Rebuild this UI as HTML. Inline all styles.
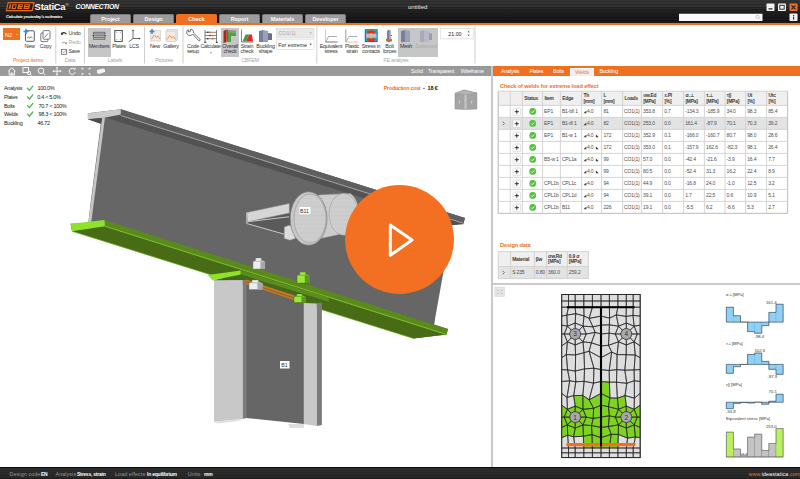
<!DOCTYPE html>
<html><head><meta charset="utf-8">
<style>
*{margin:0;padding:0;box-sizing:border-box}
html,body{width:800px;height:479px;overflow:hidden;background:#fff;font-family:"Liberation Sans",sans-serif;position:relative}
.a{position:absolute}
#title{left:0;top:0;width:800px;height:23px;background:repeating-linear-gradient(180deg,rgba(255,255,255,0.06) 0px,rgba(0,0,0,0.15) 1.1px,rgba(255,255,255,0.03) 2.3px,rgba(0,0,0,0.12) 3.2px),linear-gradient(180deg,#303030 0%,#2a2a2a 25%,#1e1e1e 50%,#141414 75%,#0e0e0e 100%);}
.tab{position:absolute;top:13.7px;height:9.3px;width:41px;background:#9c9c9c;border-radius:2px 2px 0 0;color:#fafafa;font-size:5.6px;font-weight:bold;text-align:center;line-height:8.2px;font-family:"Liberation Sans",sans-serif;letter-spacing:-0.1px;border:0.5px solid #7a7a7a;border-bottom:none}
.tab.on{background:#f07022;border-color:#f07022}
#oline{left:0;top:23px;width:800px;height:2px;background:#f07022}
.lbl{position:absolute;font-size:5.4px;color:#333;text-align:center;line-height:4.9px;white-space:nowrap;letter-spacing:-0.25px}
#tb{left:0;top:65.7px;width:491px;height:10px;background:#9a9a9a;border-top:1px solid #929292}
#split{left:490.8px;top:65.6px;width:2.5px;height:401px;background:#c8c8c8}
#hsplit{left:493px;top:282.8px;width:307px;height:2.2px;background:#cacaca}
#rtabs{left:493px;top:65.85px;width:307px;height:10.2px;background:#f07022}
.rt{position:absolute;top:66px;font-size:5.4px;color:#fff;line-height:10px;white-space:nowrap;letter-spacing:-0.2px}
#status{left:0;top:466.5px;width:800px;height:12.5px;border-top:1px solid #0c0c0c;background:repeating-linear-gradient(180deg,rgba(255,255,255,0.04) 0px,rgba(0,0,0,0.12) 1px,rgba(255,255,255,0.03) 2.2px,rgba(0,0,0,0.1) 3.1px),linear-gradient(180deg,#2a2a2a,#262626 60%,#1e1e1e)}
.st{position:absolute;top:467.5px;font-size:5.3px;line-height:13px;white-space:nowrap;color:#9a9a9a;letter-spacing:0.12px}
.st b{color:#fff;letter-spacing:-0.22px;font-size:5px}
</style></head><body>
<div id="title" class="a"></div>
<!-- TITLE BAR CONTENT -->
<svg class="a" style="left:0;top:0" width="800" height="23" viewBox="0 0 800 23">
<polygon points="8.2,2.6 34,2.6 32.2,10.6 6.4,10.6" fill="#1a1a1a" stroke="#ea6c1f" stroke-width="1.1"/>
<g fill="#ea6c1f">
<polygon points="9.6,4.2 11.2,4.2 10.2,9 8.6,9"/>
<polygon points="12.4,4.2 16.8,4.2 15.8,9 11.4,9"/>
<polygon points="18.2,4.2 23,4.2 22.6,6.9 19.2,6.9 19,7.6 22.4,7.6 22.1,9 17.2,9"/>
<polygon points="24.4,4.2 30.2,4.2 29.2,9 23.4,9"/>
</g>
<g fill="#1a1a1a">
<polygon points="13.6,5.2 15.6,5.2 15,8 13,8"/>
<rect x="19.7" y="5.3" width="2.4" height="0.7"/>
<polygon points="25.4,5.3 28.8,5.3 28.7,6 25.2,6"/>
<polygon points="24.9,7.3 28.5,7.3 28.3,8 24.8,8"/>
</g>
<text x="34.6" y="10.1" font-size="9.4" fill="#fff" font-family="Liberation Sans" font-weight="bold" letter-spacing="-0.22">StatiCa</text>
<text x="65.6" y="6" font-size="4.2" fill="#eee" font-family="Liberation Sans">®</text>
<text x="75.5" y="9.4" font-size="6.8" fill="#fff" font-family="Liberation Sans" font-weight="bold" font-style="italic" letter-spacing="-0.25">CONNECTION</text>
<text x="6" y="17.9" font-size="4.2" fill="#fff" font-family="Liberation Sans" font-weight="bold" font-style="italic" letter-spacing="-0.22">Calculate yesterday's estimates</text>
<text x="408" y="9" font-size="6" fill="#e8e8e8" font-family="Liberation Sans">untitled</text>
<!-- window buttons -->
<rect x="766.5" y="3.5" width="8" height="7.5" rx="0.8" fill="#f2f2f2"/>
<rect x="768.5" y="8.2" width="4" height="1.3" fill="#333"/>
<rect x="778" y="3.5" width="8" height="7.5" rx="0.8" fill="#f2f2f2"/>
<rect x="779.8" y="5.3" width="4.4" height="3.9" fill="none" stroke="#333" stroke-width="1"/>
<rect x="789.5" y="3.5" width="8" height="7.5" rx="0.8" fill="#f07022"/>
<path d="M791.5,5.3l4,4M795.5,5.3l-4,4" stroke="#222" stroke-width="1.2"/>
<!-- search -->
<rect x="679" y="13.75" width="83.5" height="7.25" fill="#fafafa"/>
<circle cx="757.5" cy="16.8" r="1.6" fill="none" stroke="#aaa" stroke-width="0.6"/>
<path d="M758.7,18l1.5,1.5" stroke="#aaa" stroke-width="0.6"/>
<rect x="789.5" y="13.5" width="8" height="7.5" rx="0.8" fill="#f2f2f2"/>
<rect x="793" y="15" width="1.2" height="1" fill="#333"/><rect x="793" y="16.6" width="1.2" height="3" fill="#333"/>
</svg>
<div class="tab" style="left:90px">Project</div>
<div class="tab" style="left:133px">Design</div>
<div class="tab on" style="left:176px">Check</div>
<div class="tab" style="left:219px">Report</div>
<div class="tab" style="left:262px">Materials</div>
<div class="tab" style="left:305px">Developer</div>
<div id="oline" class="a"></div>
<!-- RIBBON -->
<div class="a" style="left:87.6px;top:28px;width:23px;height:28.7px;background:#c6c6c6"></div>
<div class="a" style="left:221.2px;top:28px;width:17.5px;height:28.5px;background:#c6c6c6"></div>
<div class="a" style="left:398.2px;top:27.8px;width:39.7px;height:29.2px;background:#c6c6c6"></div>
<div class="a" style="left:2.5px;top:28.2px;width:17.4px;height:12px;background:#f07022"></div>
<svg class="a" style="left:0;top:25px" width="800" height="40" viewBox="0 25 800 40">
<g stroke="#cfcfcf" stroke-width="1"><path d="M55.8,26.7V63.5M84.5,26.7V63.5M144.5,26.7V63.5M183,26.7V63.5M316.8,26.7V63.5M475,26.7V63.5"/></g>
<text x="5" y="36.5" font-size="5.5" fill="#fff" font-family="Liberation Sans">N2</text>
<path d="M16.3,34h1.6l-0.8,0.9z" fill="#fff"/>
<!-- New doc -->
<rect x="25.5" y="30.8" width="8.8" height="10.5" rx="1" fill="#fff" stroke="#333" stroke-width="0.8"/>
<path d="M27.2,38l1.2-1 1.3,1 1.5-1.2 1.3,1.2" stroke="#333" stroke-width="0.7" fill="none"/>
<path d="M26,29v5M23.5,31.5h5" stroke="#3a8be0" stroke-width="1.6"/>
<!-- Copy -->
<rect x="40.8" y="33" width="7" height="8.6" rx="1" fill="#fff" stroke="#444" stroke-width="0.7"/>
<rect x="43" y="30.6" width="7" height="8.6" rx="1" fill="#fff" stroke="#444" stroke-width="0.7"/>
<path d="M44.5,37.5l3.5-4" stroke="#444" stroke-width="0.7"/>
<!-- Undo Redo Save -->
<path d="M61.8,33.6q2.2-2 4.6,0.4" stroke="#222" stroke-width="1.1" fill="none"/><path d="M61,32.2v2.6h2.5z" fill="#222"/>
<path d="M61.8,43q2.2-2 4.6,0.4" stroke="#999" stroke-width="0.9" fill="none"/><path d="M66.8,41.8v2.4h-2.3z" fill="#999"/>
<rect x="61.3" y="49.3" width="5.2" height="5" fill="#fff" stroke="#555" stroke-width="0.7"/>
<path d="M62.5,51.6l1.3,1.2 2.2-2.4" stroke="#555" stroke-width="0.6" fill="none"/>
<!-- Members icon -->
<g stroke="#333" stroke-width="0.6" fill="none">
<path d="M93.5,32.3h11.5M93.5,34h11.5M93.5,37.6h11.5M93.5,39.3h11.5"/>
<path d="M93.5,32.3v1.7M105,32.3v1.7M93.5,37.6v1.7M105,37.6v1.7"/>
<path d="M94.5,35.8h9.5"/>
</g>
<path d="M92.2,35.8l1.8-1.3v2.6zM106.3,35.8l-1.8-1.3v2.6z" fill="#333"/>
<!-- Plates icon -->
<rect x="114.8" y="30.5" width="7.5" height="11" fill="#fff" stroke="#333" stroke-width="0.8"/>
<path d="M115.8,31.5l1.3,1.3M121.3,31.5l-1.3,1.3M115.8,40.5l1.3-1.3M121.3,40.5l-1.3-1.3" stroke="#333" stroke-width="0.5"/>
<!-- LCS icon -->
<path d="M133,30v8.5l-4.2,3.3M133,38.5h6.5" stroke="#333" stroke-width="0.7" fill="none"/>
<path d="M132,31l1-1.6 1,1.6zM139,37.6l1.5,0.9-1.5,0.9z" fill="#333"/>
<!-- Pictures New / Gallery -->
<rect x="150.5" y="30.5" width="10" height="10.5" fill="#f6e9df" stroke="#bbb" stroke-width="0.5"/>
<path d="M151.5,39l2.7-4 2.2,2.6 1.5-1.7 2,3.1" stroke="#f07022" stroke-width="0.7" fill="none"/>
<path d="M152,29v5M149.5,31.5h5" stroke="#3a8be0" stroke-width="1.6"/>
<rect x="167.5" y="29.7" width="10" height="10.5" fill="#eee" stroke="#bbb" stroke-width="0.5"/>
<rect x="166" y="31" width="10" height="10.5" fill="#f6e9df" stroke="#bbb" stroke-width="0.5"/>
<path d="M167,39.5l2.7-4 2.2,2.6 1.5-1.7 2,3.1" stroke="#f07022" stroke-width="0.7" fill="none"/>
<!-- Code setup wrench -->
<path d="M188.2,29.6 A3.2,3.2 0 1 0 192.6,34 L198.6,40.6 A1,1 0 0 0 200,39.2 L193.6,33 A3.2,3.2 0 0 0 190.6,29.2 L190.2,31.6 188.6,32 Z" fill="#fff" stroke="#444" stroke-width="0.75" stroke-linejoin="round"/>
<!-- Calculate abacus -->
<path d="M205,30v12.5M216.5,30v12.5M205,32.3h11.5M205,35.5h11.5M205,38.7h11.5" stroke="#333" stroke-width="0.6"/><path d="M204.3,42.3h2M215.8,42.3h2" stroke="#222" stroke-width="1"/>
<g fill="#e06a20"><rect x="209.2" y="31.6" width="1.6" height="1.4"/><rect x="211.6" y="34.8" width="1.6" height="1.4"/><rect x="211.6" y="38" width="1.6" height="1.4"/></g>
<g fill="#444"><rect x="207" y="31.6" width="1.5" height="1.4"/><rect x="209.2" y="34.8" width="1.5" height="1.4"/><rect x="207" y="38" width="1.5" height="1.4"/></g>
<path d="M210,52.5h1.8l-0.9,1z" fill="#333"/>
<!-- Overall check -->
<polygon points="223.5,31 226.5,29.5 226.5,42 223.5,43" fill="#a02a20"/>
<polygon points="226.5,29.5 228,30 228,41.5 226.5,42" fill="#d03a2a"/>
<polygon points="228,32 236,32.5 236,36 231,36 231,42 228,42" fill="#4aa63a"/>
<polygon points="228,30 236,30.5 236,32.5 228,32" fill="#909090"/>
<!-- Strain check -->
<path d="M241.5,29.5v12.5h12" stroke="#333" stroke-width="0.6" fill="none"/>
<polygon points="242.5,41.5 245.5,34.5 249,34.5 246,41.5" fill="#2aa64a"/>
<polygon points="246,41.5 249,34.5 252,34.5 253,41.5" fill="#e02a2a"/>
<!-- Buckling shape -->
<polygon points="259,31 263,30 263,42 259,42" fill="#7a7e9a"/>
<polygon points="263,30 268,31 268,42 263,42" fill="#9aa0b8"/>
<polygon points="268,33 272,33.5 272,40 268,40" fill="#6a6e88"/>
<!-- CO1(1) dropdowns -->
<rect x="276.5" y="28.5" width="37.5" height="9.5" fill="#e8e8e8" stroke="#d0d0d0" stroke-width="0.5"/>
<text x="278.5" y="35.4" font-size="5.3" fill="#aaa" font-family="Liberation Sans">CO1(1)</text>
<path d="M309.5,32.5h2.2l-1.1,1.2z" fill="#999"/>
<rect x="276.5" y="39.8" width="37.5" height="9.6" fill="#fff" stroke="#cfcfcf" stroke-width="0.5"/>
<text x="278.3" y="46.6" font-size="5.3" fill="#222" font-family="Liberation Sans">For extreme</text>
<path d="M309.5,43.8h2.4l-1.2,1.3z" fill="#222"/>
<!-- Equivalent stress -->
<path d="M325.5,29.5v12.5" stroke="#f4a080" stroke-width="0.7"/>
<path d="M325.5,42h12" stroke="#333" stroke-width="0.7"/>
<path d="M326,41.5l2.5-5h8.5" stroke="#8a8a8a" stroke-width="0.7" fill="none"/>
<!-- Plastic strain -->
<path d="M345.8,29.5v12.5" stroke="#555" stroke-width="0.6"/>
<path d="M345.8,42h12.5" stroke="#f4a080" stroke-width="0.7"/>
<path d="M346.3,41.5l2.5-5h8.5" stroke="#8a8a8a" stroke-width="0.7" fill="none"/>
<!-- Stress in contacts -->
<rect x="364.8" y="29.3" width="12.8" height="12.8" fill="#1e3adc"/>
<rect x="365.6" y="30" width="11.2" height="11.4" fill="#22c0b8"/>
<ellipse cx="371.2" cy="31.8" rx="4.6" ry="1.6" fill="#f02a1a"/>
<ellipse cx="371.2" cy="39.6" rx="4.6" ry="1.6" fill="#f02a1a"/>
<rect x="366" y="34" width="10.4" height="3.6" fill="#b8c0d0"/>
<rect x="370.5" y="33" width="1.4" height="5.5" fill="#c8d830"/>
<!-- Bolt forces -->
<polygon points="386,39 389,37.5 392,39 392,41 389,42.5 386,41" fill="#d06a2a"/>
<polygon points="387,31 389,29.5 389,39.5 387,40" fill="#7a80a0"/>
<polygon points="389,29.5 390.8,30.5 390.8,39.5 389,39.5" fill="#9aa0c0"/>
<rect x="390.8" y="35" width="1.2" height="1" fill="#555"/>
<!-- Mesh / Deformed -->
<polygon points="401,31 405.5,30 405.5,42 401,42" fill="#7a7e9a"/>
<polygon points="405.5,30 410,31 410,42 405.5,42" fill="#9aa0b8"/>
<polygon points="420,31 424.5,30 424.5,42 420,42" fill="#a8aabb"/>
<polygon points="424.5,30 429,31 429,42 424.5,42" fill="#b8bac8"/>
<polygon points="429,33 432,33.5 432,40 429,40" fill="#9a9cb0"/>
<!-- spinner -->
<rect x="440.2" y="28.3" width="33" height="10.6" fill="#fff" stroke="#cfcfcf" stroke-width="0.6"/>
<text x="448.3" y="35.7" font-size="5.3" fill="#222" font-family="Liberation Sans">21.00</text>
<path d="M467.5,32.3h2.2l-1.1-1.3zM467.5,34.8h2.2l-1.1,1.3z" fill="#333"/>
</svg>
<div class="lbl" style="left:24.5px;top:43.6px;width:10px">New</div>
<div class="lbl" style="left:39.8px;top:43.6px;width:11px">Copy</div>
<div class="lbl" style="left:12px;top:58.4px;width:32px;color:#f39a62;font-weight:bold;letter-spacing:-0.3px">Project items</div>
<div class="lbl" style="left:68.5px;top:30.6px;text-align:left">Undo</div>
<div class="lbl" style="left:68.5px;top:40px;text-align:left;color:#aaa">Redo</div>
<div class="lbl" style="left:68.5px;top:49.3px;text-align:left">Save</div>
<div class="lbl" style="left:64px;top:58.2px;width:12px;color:#a8a8a8">Data</div>
<div class="lbl" style="left:87.6px;top:43.6px;width:23px">Members</div>
<div class="lbl" style="left:112px;top:43.6px;width:14px">Plates</div>
<div class="lbl" style="left:128px;top:43.6px;width:12px">LCS</div>
<div class="lbl" style="left:105px;top:58.2px;width:20px;color:#a8a8a8">Labels</div>
<div class="lbl" style="left:148px;top:43.6px;width:14px">New</div>
<div class="lbl" style="left:162px;top:43.6px;width:18px">Gallery</div>
<div class="lbl" style="left:153px;top:58.2px;width:22px;color:#a8a8a8">Pictures</div>
<div class="lbl" style="left:185px;top:43.6px;width:16px">Code<br>setup</div>
<div class="lbl" style="left:200px;top:43.6px;width:21px">Calculate</div>
<div class="lbl" style="left:221px;top:43.6px;width:18px">Overall<br>check</div>
<div class="lbl" style="left:239px;top:43.6px;width:16px">Strain<br>check</div>
<div class="lbl" style="left:255px;top:43.6px;width:21px">Buckling<br>shape</div>
<div class="lbl" style="left:240px;top:58.2px;width:20px;color:#a8a8a8">CBFEM</div>
<div class="lbl" style="left:318px;top:43.6px;width:26px">Equivalent<br>stress</div>
<div class="lbl" style="left:343px;top:43.6px;width:18px">Plastic<br>strain</div>
<div class="lbl" style="left:360px;top:43.6px;width:22px">Stress in<br>contacts</div>
<div class="lbl" style="left:382px;top:43.6px;width:15px">Bolt<br>forces</div>
<div class="lbl" style="left:398.5px;top:43.6px;width:15px">Mesh</div>
<div class="lbl" style="left:413.5px;top:43.6px;width:25px;color:#aaa">Deformed</div>
<div class="lbl" style="left:380px;top:58.2px;width:32px;color:#a8a8a8">FE analysis</div>
<div id="tb" class="a"></div>
<!-- TOOLBAR ICONS -->
<svg class="a" style="left:0;top:65px" width="491" height="11" viewBox="0 65 491 11">
<g stroke="#f8f8f8" stroke-width="1" fill="none">
<path d="M8.2,71.2l3.6-3.4 3.6,3.4M9.2,70.5v4.6h5.2v-4.6M11,75.1v-2h1.7v2"/>
<rect x="23" y="67.5" width="5.5" height="5"/>
<circle cx="29" cy="73" r="1.7"/><path d="M30.2,74.2l1.2,1.2"/>
<circle cx="41" cy="70.8" r="2.8"/><path d="M43,72.8l2.2,2.2"/>
<path d="M57,67.2v8M53,71.2h8M56,68.2l1-1 1,1M56,74.2l1,1 1-1M54,70.2l-1,1 1,1M60,70.2l1,1-1,1"/>
<path d="M74.6,69.5a3,3 0 1 0 0.6,2.6M73.5,68.3l1.4,1.3 0.4-1.9"/>
<path d="M82,67.5v1.5h1.5M90,67.5v1.5h-1.5M82,75.2v-1.5h1.5M90,75.2v-1.5h-1.5"/>
</g>
<polygon points="97,70 103,68.5 105,69.5 105,72 99,74 97,73" fill="#f4f4f4"/>
<text x="411" y="73" font-size="5.4" fill="#fff" font-family="Liberation Sans" letter-spacing="0">Solid</text>
<text x="428" y="73" font-size="5.4" fill="#fff" font-family="Liberation Sans" letter-spacing="-0.25">Transparent</text>
<text x="460.8" y="73" font-size="5.4" fill="#fff" font-family="Liberation Sans" letter-spacing="-0.2">Wireframe</text>
</svg>
<!-- LEFT PANEL TEXT -->
<svg class="a" style="left:0;top:80px" width="120" height="50" viewBox="0 80 120 50">
<g font-size="5.5" fill="#222" font-family="Liberation Sans" letter-spacing="-0.3">
<text x="4" y="90.3">Analysis</text>
<text x="4" y="99">Plates</text>
<text x="4" y="107.6">Bolts</text>
<text x="4" y="116.2">Welds</text>
<text x="4" y="125.1">Buckling</text>
<text x="37.6" y="90.3">100.0%</text>
<text x="37.2" y="99">0.4 &lt; 5.0%</text>
<text x="38.6" y="107.6">70.7 &lt; 100%</text>
<text x="38.6" y="116.2">98.3 &lt; 100%</text>
<text x="37.6" y="125.1">46.72</text>
</g>
<g stroke="#4db848" stroke-width="1.3" fill="none" stroke-linecap="round">
<path d="M27.5,88.3l2,2 3.3-4.2"/>
<path d="M27.5,97l2,2 3.3-4.2"/>
<path d="M27.5,105.6l2,2 3.3-4.2"/>
<path d="M27.5,114.2l2,2 3.3-4.2"/>
</g>
</svg>
<!-- production cost + cube -->
<svg class="a" style="left:370px;top:80px" width="121" height="40" viewBox="370 80 121 40">
<text x="383.8" y="90" font-size="5.4" fill="#f07022" font-family="Liberation Sans" font-weight="bold" letter-spacing="-0.3">Production cost</text>
<text x="423" y="90" font-size="5.6" fill="#222" font-family="Liberation Sans" font-weight="bold">-</text>
<text x="427.5" y="90" font-size="5.6" fill="#222" font-family="Liberation Sans" font-weight="bold" letter-spacing="-0.2">18 €</text>
<polygon points="455,93.4 464,90 476.9,93.1 476.9,109 465.3,109.5 455,109" fill="#a4a4a4" stroke="#8a8a8a" stroke-width="0.5"/>
<polygon points="455,93.4 464,90 476.9,93.1 465.3,95" fill="#b4b4b4" stroke="#8c8c8c" stroke-width="0.4"/>
<rect x="464.5" y="95" width="2" height="14.5" fill="#c6c6c6"/>
<path d="M459.5,100.5v3M472,100.5l-0.6,3" stroke="#e8e8e8" stroke-width="0.7"/>
</svg>
<svg class="a" style="left:0;top:76px" width="491" height="390" viewBox="0 76 491 390">
<!-- base -->
<polygon points="87.9,113.3 120.8,109.2 465,218 463.3,224.2 451,225.3 440,276 434,324.5 448,329 446.5,334.5 413.6,338.6 72,231.25 70.5,223.75 88.3,223 91,200 100.8,123.75 87.9,119.2" fill="#5c5c5c"/>
<!-- web -->
<polygon points="105,116.5 452,224.3 434,324.5 91,222" fill="#666666"/>
<!-- top flange underside -->
<polygon points="105,117.5 120.8,115.9 463.3,223.4 451,225.3" fill="#525252"/>
<!-- top flange side band -->
<polygon points="120.8,109.2 465,218 463.3,224 120.8,115.6" fill="#5f5f5f"/>
<line x1="120.8" y1="115.6" x2="463.3" y2="223.2" stroke="#a9a9a9" stroke-width="0.9"/>
<!-- web end strip -->
<polygon points="102.1,117.9 105,117.5 91.3,222 88.3,223" fill="#c6c6c6"/>
<!-- top flange end face -->
<polygon points="87.9,113.3 120.8,109.2 120.8,114.6 105,117.5 102.1,117.9 87.9,119.2" fill="#cacaca"/>
<polygon points="87.9,119.2 102.1,117.9 100.8,123.75" fill="#4c4c4c"/>
<!-- bottom flange -->
<polygon points="104.5,220 448,329 446.5,334.5 105,226.25" fill="#5a8a1c"/>
<polygon points="72,231.25 105,226.25 446.5,334.5 413.6,338.6" fill="#486c16"/>
<line x1="105" y1="226.25" x2="446.5" y2="334.5" stroke="#86c92e" stroke-width="0.9"/>
<line x1="72" y1="231.25" x2="413.6" y2="338.6" stroke="#7fd02a" stroke-width="0.6"/>
<polygon points="70.5,223.75 104.5,220 105,226.25 72,231.25" fill="#8ee22a"/>
<!-- column -->
<polygon points="246,279 304,298 304,424 246,418" fill="#666666"/>
<polygon points="214.1,280.3 242.8,276.6 242.8,419 214,421.7" fill="#c8c8c8"/>
<polygon points="242.8,276.6 246.5,277 246.5,418 242.8,419" fill="#7c7c7c"/>
<polygon points="214,421.7 242.8,419 246.5,418 238,421 218,423.5" fill="#e0e0e0"/>
<polygon points="303.75,303.1 316.9,303.5 316.9,426 303.75,424" fill="#c8c8c8"/>
<polygon points="316.9,303.5 321.9,302 321.9,425 316.9,426" fill="#7c7c7c"/>
<polygon points="288,424 304,424 304,428 290,428" fill="#dedede"/>
<!-- column end plate -->
<polygon points="240.7,270.4 328.75,297.5 328.75,301.9 240.7,274.5" fill="#5b8c1c"/>
<polygon points="212.5,280.3 240.7,274.5 328.75,301.9 322,303 246,280" fill="#46681a"/>
<polygon points="207.8,275 240.7,270.4 240.7,274.5 212.5,280.3" fill="#8ee22a"/>
<!-- weld -->
<polygon points="246,279.5 294,295.5 294,300 246,284" fill="#c47a1e"/>
<line x1="246" y1="282" x2="294" y2="298" stroke="#7a4a10" stroke-width="0.6"/>
<!-- bolts -->
<polygon points="253,261.85 256.0,260.2 262.0,260.2 265,261.85 265,269 253,269" fill="#ededed" stroke="#7a7a7a" stroke-width="0.45"/><polygon points="260.44,261.3 265,261.85 265,269 260.44,269" fill="#a8a8a8"/><polygon points="255.64,258 261.4,258 261.4,261.3 255.64,261.3" fill="#ededed" stroke="#7a7a7a" stroke-width="0.4"/>
<polygon points="249,283.325 252.375,281.9 259.125,281.9 262.5,283.325 262.5,289.5 249,289.5" fill="#ededed" stroke="#7a7a7a" stroke-width="0.45"/><polygon points="257.37,282.85 262.5,283.325 262.5,289.5 257.37,289.5" fill="#a8a8a8"/><polygon points="251.97,280 258.45,280 258.45,282.85 251.97,282.85" fill="#ededed" stroke="#7a7a7a" stroke-width="0.4"/>
<polygon points="297,275.85 300.125,274.2 306.375,274.2 309.5,275.85 309.5,283 297,283" fill="#9be83a" stroke="#3f6e10" stroke-width="0.45"/><polygon points="304.75,275.3 309.5,275.85 309.5,283 304.75,283" fill="#5c9a1c"/><polygon points="299.75,272 305.75,272 305.75,275.3 299.75,275.3" fill="#9be83a" stroke="#3f6e10" stroke-width="0.4"/>
<polygon points="294,296.975 297.0,295.7 303.0,295.7 306,296.975 306,302.5 294,302.5" fill="#9be83a" stroke="#3f6e10" stroke-width="0.45"/><polygon points="301.44,296.55 306,296.975 306,302.5 301.44,302.5" fill="#5c9a1c"/><polygon points="296.64,294 302.4,294 302.4,296.55 296.64,296.55" fill="#9be83a" stroke="#3f6e10" stroke-width="0.4"/>
<!-- B1 label -->
<rect x="280" y="361" width="9.5" height="7.5" fill="#fff"/>
<text x="281.2" y="367" font-size="5.2" fill="#333" font-family="Liberation Sans">B1</text>
<!-- B11 cylinder arm -->
<defs><pattern id="dots" width="1.3" height="1.3" patternUnits="userSpaceOnUse"><rect width="1.3" height="1.3" fill="#dcdcdc"/><circle cx="0.65" cy="0.65" r="0.36" fill="#959595"/></pattern></defs>
<polygon points="246.7,212.6 289.3,203.4 290,228 285,234.4 246.7,223.5" fill="#5a5a5a"/>
<polygon points="246.7,212.6 289.3,203.4 289.3,213 247.5,221.8" fill="#d6d6d6" stroke="#8e8e8e" stroke-width="0.5"/>
<path d="M247,221.8 L289,216.8 M246.7,223.5 L285,234.4" stroke="#c8c8c8" stroke-width="1"/>
<path d="M246.7,212.6v11" stroke="#bbb" stroke-width="1.2"/>
<polygon points="284.3,227 289,225.2 295.2,227 295.2,238.5 290,240.2 284.3,238.5" fill="#dcdcdc" stroke="#8a8a8a" stroke-width="0.5"/>
<!-- cylinder body -->
<path d="M318.6,195 L350.4,193.4 A14.6,20.9 0 0 1 347,232.7 L320,238.6 Z" fill="url(#dots)" stroke="#9a9a9a" stroke-width="0.5"/>
<ellipse cx="343.7" cy="214.3" rx="14.6" ry="20.9" fill="url(#dots)" stroke="#9a9a9a" stroke-width="0.6"/>
<ellipse cx="308.6" cy="218.5" rx="18.4" ry="26.8" fill="#c8c8c8" stroke="#7a7a7a" stroke-width="0.7"/>
<ellipse cx="310" cy="218.5" rx="16" ry="24.5" fill="url(#dots)" stroke="#8a8a8a" stroke-width="0.5"/>
<rect x="299.5" y="207" width="11" height="7.3" fill="#fff"/>
<text x="300.1" y="212.9" font-size="5.2" fill="#333" font-family="Liberation Sans">B11</text>
<!-- play -->
<circle cx="399.5" cy="239.5" r="54.5" fill="#f37022"/>
<polygon points="390.3,225 412,240 390.3,255.3" fill="none" stroke="#fff" stroke-width="3" stroke-linejoin="round"/>
</svg>
<div id="split" class="a"></div>
<div id="rtabs" class="a"></div>
<div class="a" style="left:569.6px;top:67.6px;width:24.2px;height:8.5px;background:#efefef;border:1px solid #fff;border-bottom:none"></div>
<div class="rt" style="left:500.9px">Analysis</div>
<div class="rt" style="left:529.4px">Plates</div>
<div class="rt" style="left:553px">Bolts</div>
<div class="rt" style="left:575.2px;top:66.8px;color:#f08448">Welds</div>
<div class="rt" style="left:599.4px">Buckling</div>
<svg class="a" style="left:493px;top:76px" width="307" height="210" viewBox="493 76 307 210">
<rect x="498.2" y="91.2" width="289.40000000000003" height="14.200000000000003" fill="#efefef"/>
<rect x="498.2" y="117.4" width="289.40000000000003" height="12.0" fill="#e3e3e3"/>
<path d="M498.2,91.2V213.4M510.3,91.2V213.4M522.4,91.2V213.4M542.6,91.2V213.4M560.4,91.2V213.4M581.6,91.2V213.4M601.6,91.2V213.4M622.6,91.2V213.4M641.4,91.2V213.4M662.6,91.2V213.4M683.6,91.2V213.4M704.4,91.2V213.4M725,91.2V213.4M745.6,91.2V213.4M766.6,91.2V213.4M787.6,91.2V213.4M498.2,91.2H787.6M498.2,105.4H787.6M498.2,117.4H787.6M498.2,129.4H787.6M498.2,141.4H787.6M498.2,153.4H787.6M498.2,165.4H787.6M498.2,177.4H787.6M498.2,189.4H787.6M498.2,201.4H787.6M498.2,213.4H787.6" stroke="#d0d0d0" stroke-width="0.9" fill="none"/>
<path d="M498.2,91.2V213.4H787.6V91.2" stroke="#c4c4c4" stroke-width="1" fill="none"/>
<g font-family="Liberation Sans" font-size="4.9" font-weight="bold" fill="#3a3a3a" letter-spacing="-0.2">
<text x="524.1999999999999" y="100.1">Status</text>
<text x="544.4" y="100.1">Item</text>
<text x="562.1999999999999" y="100.1">Edge</text>
<text x="583.4" y="97.4">Th</text>
<text x="583.4" y="102.8">[mm]</text>
<text x="603.4" y="97.4">L</text>
<text x="603.4" y="102.8">[mm]</text>
<text x="624.4" y="100.1">Loads</text>
<text x="643.1999999999999" y="97.4">ow.Ed</text>
<text x="643.1999999999999" y="102.8">[MPa]</text>
<text x="664.4" y="97.4">ε.Pl</text>
<text x="664.4" y="102.8">[%]</text>
<text x="685.4" y="97.4">σ.⊥</text>
<text x="685.4" y="102.8">[MPa]</text>
<text x="706.1999999999999" y="97.4">τ.⊥</text>
<text x="706.1999999999999" y="102.8">[MPa]</text>
<text x="726.8" y="97.4">τ||</text>
<text x="726.8" y="102.8">[MPa]</text>
<text x="747.4" y="97.4">Ut</text>
<text x="747.4" y="102.8">[%]</text>
<text x="768.4" y="97.4">Utc</text>
<text x="768.4" y="102.8">[%]</text>
</g>
<g font-family="Liberation Sans" font-size="5" fill="#4e4e4e" letter-spacing="-0.15">
<rect x="513.0" y="108.0" width="7.6" height="7.4" rx="0.6" fill="#fff" stroke="#cfcfcf" stroke-width="0.6"/>
<path d="M516.8,109.60000000000001v4.2M514.7,111.7h4.2" stroke="#222" stroke-width="0.9"/>
<circle cx="532.7" cy="111.4" r="3.4" fill="#54c43a"/>
<path d="M531.0,111.5l1.2,1.2 2.2-2.3" stroke="#fff" stroke-width="0.9" fill="none"/>
<text x="544.1" y="113.2">EP1</text>
<text x="561.9" y="113.2">B1-bfl 1</text>
<path d="M583.6,113.2h2.8v-2.8z" fill="#333"/>
<text x="587.0" y="113.2">4.0</text>
<text x="603.4" y="113.2">81</text>
<text x="624.1" y="113.2">CO1(1)</text>
<text x="643.0" y="113.2">353.8</text>
<text x="664.2" y="113.2">0.7</text>
<text x="685.2" y="113.2">-134.3</text>
<text x="706.0" y="113.2">-185.9</text>
<text x="726.6" y="113.2">34.0</text>
<text x="747.2" y="113.2">98.3</text>
<text x="768.2" y="113.2">85.4</text>
<rect x="513.0" y="120.0" width="7.6" height="7.4" rx="0.6" fill="#fff" stroke="#cfcfcf" stroke-width="0.6"/>
<path d="M516.8,121.60000000000001v4.2M514.7,123.7h4.2" stroke="#222" stroke-width="0.9"/>
<circle cx="532.7" cy="123.4" r="3.4" fill="#54c43a"/>
<path d="M531.0,123.5l1.2,1.2 2.2-2.3" stroke="#fff" stroke-width="0.9" fill="none"/>
<text x="544.1" y="125.2">EP1</text>
<text x="561.9" y="125.2">B1-tfl 1</text>
<path d="M583.6,125.2h2.8v-2.8z" fill="#333"/>
<text x="587.0" y="125.2">4.0</text>
<text x="603.4" y="125.2">82</text>
<text x="624.1" y="125.2">CO1(1)</text>
<text x="643.0" y="125.2">253.0</text>
<text x="664.2" y="125.2">0.0</text>
<text x="685.2" y="125.2">161.4</text>
<text x="706.0" y="125.2">-87.9</text>
<text x="726.6" y="125.2">70.1</text>
<text x="747.2" y="125.2">70.3</text>
<text x="768.2" y="125.2">39.2</text>
<path d="M502.59999999999997,121.60000000000001l1.8,1.8-1.8,1.8" stroke="#444" stroke-width="0.7" fill="none"/>
<rect x="513.0" y="132.0" width="7.6" height="7.4" rx="0.6" fill="#fff" stroke="#cfcfcf" stroke-width="0.6"/>
<path d="M516.8,133.6v4.2M514.7,135.70000000000002h4.2" stroke="#222" stroke-width="0.9"/>
<circle cx="532.7" cy="135.4" r="3.4" fill="#54c43a"/>
<path d="M531.0,135.5l1.2,1.2 2.2-2.3" stroke="#fff" stroke-width="0.9" fill="none"/>
<text x="544.1" y="137.20000000000002">EP1</text>
<text x="561.9" y="137.20000000000002">B1-w 1</text>
<path d="M583.6,137.20000000000002h2.8v-2.8z" fill="#333"/>
<text x="587.0" y="137.20000000000002">4.0</text>
<path d="M595.9,134.4v2.8h2.8z" fill="#333"/>
<text x="603.4" y="137.20000000000002">172</text>
<text x="624.1" y="137.20000000000002">CO1(1)</text>
<text x="643.0" y="137.20000000000002">352.9</text>
<text x="664.2" y="137.20000000000002">0.1</text>
<text x="685.2" y="137.20000000000002">-166.0</text>
<text x="706.0" y="137.20000000000002">-160.7</text>
<text x="726.6" y="137.20000000000002">80.7</text>
<text x="747.2" y="137.20000000000002">98.0</text>
<text x="768.2" y="137.20000000000002">28.6</text>
<rect x="513.0" y="144.0" width="7.6" height="7.4" rx="0.6" fill="#fff" stroke="#cfcfcf" stroke-width="0.6"/>
<path d="M516.8,145.6v4.2M514.7,147.70000000000002h4.2" stroke="#222" stroke-width="0.9"/>
<circle cx="532.7" cy="147.4" r="3.4" fill="#54c43a"/>
<path d="M531.0,147.5l1.2,1.2 2.2-2.3" stroke="#fff" stroke-width="0.9" fill="none"/>
<path d="M583.6,149.20000000000002h2.8v-2.8z" fill="#333"/>
<text x="587.0" y="149.20000000000002">4.0</text>
<path d="M595.9,146.4v2.8h2.8z" fill="#333"/>
<text x="603.4" y="149.20000000000002">172</text>
<text x="624.1" y="149.20000000000002">CO1(1)</text>
<text x="643.0" y="149.20000000000002">353.0</text>
<text x="664.2" y="149.20000000000002">0.1</text>
<text x="685.2" y="149.20000000000002">-157.9</text>
<text x="706.0" y="149.20000000000002">162.6</text>
<text x="726.6" y="149.20000000000002">-82.3</text>
<text x="747.2" y="149.20000000000002">98.1</text>
<text x="768.2" y="149.20000000000002">26.4</text>
<rect x="513.0" y="156.0" width="7.6" height="7.4" rx="0.6" fill="#fff" stroke="#cfcfcf" stroke-width="0.6"/>
<path d="M516.8,157.6v4.2M514.7,159.70000000000002h4.2" stroke="#222" stroke-width="0.9"/>
<circle cx="532.7" cy="159.4" r="3.4" fill="#54c43a"/>
<path d="M531.0,159.5l1.2,1.2 2.2-2.3" stroke="#fff" stroke-width="0.9" fill="none"/>
<text x="544.1" y="161.20000000000002">B5-w 1</text>
<text x="561.9" y="161.20000000000002">CPL1a</text>
<path d="M583.6,161.20000000000002h2.8v-2.8z" fill="#333"/>
<text x="587.0" y="161.20000000000002">4.0</text>
<path d="M595.9,158.4v2.8h2.8z" fill="#333"/>
<text x="603.4" y="161.20000000000002">99</text>
<text x="624.1" y="161.20000000000002">CO1(1)</text>
<text x="643.0" y="161.20000000000002">57.0</text>
<text x="664.2" y="161.20000000000002">0.0</text>
<text x="685.2" y="161.20000000000002">-42.4</text>
<text x="706.0" y="161.20000000000002">-21.6</text>
<text x="726.6" y="161.20000000000002">-3.9</text>
<text x="747.2" y="161.20000000000002">16.4</text>
<text x="768.2" y="161.20000000000002">7.7</text>
<rect x="513.0" y="168.0" width="7.6" height="7.4" rx="0.6" fill="#fff" stroke="#cfcfcf" stroke-width="0.6"/>
<path d="M516.8,169.6v4.2M514.7,171.70000000000002h4.2" stroke="#222" stroke-width="0.9"/>
<circle cx="532.7" cy="171.4" r="3.4" fill="#54c43a"/>
<path d="M531.0,171.5l1.2,1.2 2.2-2.3" stroke="#fff" stroke-width="0.9" fill="none"/>
<path d="M583.6,173.20000000000002h2.8v-2.8z" fill="#333"/>
<text x="587.0" y="173.20000000000002">4.0</text>
<path d="M595.9,170.4v2.8h2.8z" fill="#333"/>
<text x="603.4" y="173.20000000000002">99</text>
<text x="624.1" y="173.20000000000002">CO1(1)</text>
<text x="643.0" y="173.20000000000002">80.5</text>
<text x="664.2" y="173.20000000000002">0.0</text>
<text x="685.2" y="173.20000000000002">-52.4</text>
<text x="706.0" y="173.20000000000002">31.3</text>
<text x="726.6" y="173.20000000000002">16.2</text>
<text x="747.2" y="173.20000000000002">22.4</text>
<text x="768.2" y="173.20000000000002">8.9</text>
<rect x="513.0" y="180.0" width="7.6" height="7.4" rx="0.6" fill="#fff" stroke="#cfcfcf" stroke-width="0.6"/>
<path d="M516.8,181.6v4.2M514.7,183.70000000000002h4.2" stroke="#222" stroke-width="0.9"/>
<circle cx="532.7" cy="183.4" r="3.4" fill="#54c43a"/>
<path d="M531.0,183.5l1.2,1.2 2.2-2.3" stroke="#fff" stroke-width="0.9" fill="none"/>
<text x="544.1" y="185.20000000000002">CPL1b</text>
<text x="561.9" y="185.20000000000002">CPL1c</text>
<path d="M583.6,185.20000000000002h2.8v-2.8z" fill="#333"/>
<text x="587.0" y="185.20000000000002">4.0</text>
<text x="603.4" y="185.20000000000002">94</text>
<text x="624.1" y="185.20000000000002">CO1(1)</text>
<text x="643.0" y="185.20000000000002">44.9</text>
<text x="664.2" y="185.20000000000002">0.0</text>
<text x="685.2" y="185.20000000000002">-16.8</text>
<text x="706.0" y="185.20000000000002">24.0</text>
<text x="726.6" y="185.20000000000002">-1.0</text>
<text x="747.2" y="185.20000000000002">12.5</text>
<text x="768.2" y="185.20000000000002">3.2</text>
<rect x="513.0" y="192.0" width="7.6" height="7.4" rx="0.6" fill="#fff" stroke="#cfcfcf" stroke-width="0.6"/>
<path d="M516.8,193.6v4.2M514.7,195.70000000000002h4.2" stroke="#222" stroke-width="0.9"/>
<circle cx="532.7" cy="195.4" r="3.4" fill="#54c43a"/>
<path d="M531.0,195.5l1.2,1.2 2.2-2.3" stroke="#fff" stroke-width="0.9" fill="none"/>
<text x="544.1" y="197.20000000000002">CPL1b</text>
<text x="561.9" y="197.20000000000002">CPL1d</text>
<path d="M583.6,197.20000000000002h2.8v-2.8z" fill="#333"/>
<text x="587.0" y="197.20000000000002">4.0</text>
<text x="603.4" y="197.20000000000002">94</text>
<text x="624.1" y="197.20000000000002">CO1(1)</text>
<text x="643.0" y="197.20000000000002">39.1</text>
<text x="664.2" y="197.20000000000002">0.0</text>
<text x="685.2" y="197.20000000000002">1.7</text>
<text x="706.0" y="197.20000000000002">22.5</text>
<text x="726.6" y="197.20000000000002">0.6</text>
<text x="747.2" y="197.20000000000002">10.9</text>
<text x="768.2" y="197.20000000000002">5.1</text>
<rect x="513.0" y="204.0" width="7.6" height="7.4" rx="0.6" fill="#fff" stroke="#cfcfcf" stroke-width="0.6"/>
<path d="M516.8,205.6v4.2M514.7,207.70000000000002h4.2" stroke="#222" stroke-width="0.9"/>
<circle cx="532.7" cy="207.4" r="3.4" fill="#54c43a"/>
<path d="M531.0,207.5l1.2,1.2 2.2-2.3" stroke="#fff" stroke-width="0.9" fill="none"/>
<text x="544.1" y="209.20000000000002">CPL1b</text>
<text x="561.9" y="209.20000000000002">B11</text>
<path d="M583.6,209.20000000000002h2.8v-2.8z" fill="#333"/>
<text x="587.0" y="209.20000000000002">4.0</text>
<text x="603.4" y="209.20000000000002">226</text>
<text x="624.1" y="209.20000000000002">CO1(1)</text>
<text x="643.0" y="209.20000000000002">19.1</text>
<text x="664.2" y="209.20000000000002">0.0</text>
<text x="685.2" y="209.20000000000002">-5.5</text>
<text x="706.0" y="209.20000000000002">6.2</text>
<text x="726.6" y="209.20000000000002">-8.6</text>
<text x="747.2" y="209.20000000000002">5.3</text>
<text x="768.2" y="209.20000000000002">2.7</text>
</g>
<rect x="498.2" y="251.6" width="90.19999999999999" height="15.000000000000028" fill="#efefef"/>
<rect x="498.2" y="266.6" width="90.19999999999999" height="12.0" fill="#e3e3e3"/>
<path d="M498.2,251.6V278.6M510.6,251.6V278.6M534.4,251.6V278.6M546.6,251.6V278.6M567.4,251.6V278.6M588.4,251.6V278.6M498.2,251.6H588.4M498.2,266.6H588.4M498.2,278.6H588.4" stroke="#cfcfcf" stroke-width="0.9" fill="none"/>
<g font-family="Liberation Sans" font-size="4.9" font-weight="bold" fill="#3a3a3a" letter-spacing="-0.2">
<text x="512.2" y="260.90000000000003">Material</text>
<text x="535.8" y="260.90000000000003">βw</text>
<text x="548.0" y="257.8">σw,Rd</text><text x="548.0" y="263.4">[MPa]</text>
<text x="568.8" y="257.8">0.9 σ</text><text x="568.8" y="263.4">[MPa]</text>
</g><g font-family="Liberation Sans" font-size="5" fill="#4e4e4e" letter-spacing="-0.15">
<text x="512.2" y="274.40000000000003">S 235</text><text x="535.8" y="274.40000000000003">0.80</text><text x="548.0" y="274.40000000000003">360.0</text><text x="568.8" y="274.40000000000003">259.2</text>
<path d="M502.59999999999997,270.8l1.8,1.8-1.8,1.8" stroke="#444" stroke-width="0.7" fill="none"/>
</g>
<text x="500" y="87.6" font-family="Liberation Sans" font-size="5.6" font-weight="bold" fill="#f07022" letter-spacing="-0.1">Check of welds for extreme load effect</text>
<text x="500" y="247.2" font-family="Liberation Sans" font-size="5.6" font-weight="bold" fill="#f07022" letter-spacing="-0.1">Design data</text>
</svg><div id="hsplit" class="a"></div>
<svg class="a" style="left:493px;top:285px" width="307" height="181.5" viewBox="493 285 307 181.5">
<rect x="494.8" y="287" width="9.8" height="9.6" fill="#e6e6e6" stroke="#d4d4d4" stroke-width="0.5"/>
<path d="M497,289.5l1.4,1.4M502.4,289.5l-1.4,1.4M497,294.3l1.4-1.4M502.4,294.3l-1.4-1.4" stroke="#888" stroke-width="0.6"/>
<polygon points="561.7,294.5 568.5,294.5 568.5,301.0 561.7,301.0" fill="#dedede"/>
<polygon points="568.5,294.5 575.2,294.5 575.2,301.0 568.5,301.0" fill="#dedede"/>
<polygon points="575.2,294.5 583.8,294.5 583.8,301.0 575.2,301.0" fill="#dedede"/>
<polygon points="583.8,294.5 592.4,294.5 592.4,301.0 583.8,301.0" fill="#dedede"/>
<polygon points="592.4,294.5 601.0,294.5 601.0,301.0 592.4,301.0" fill="#dedede"/>
<polygon points="601.0,294.5 609.4,294.5 609.4,301.0 601.0,301.0" fill="#dedede"/>
<polygon points="609.4,294.5 617.9,294.5 617.9,301.0 609.4,301.0" fill="#dedede"/>
<polygon points="617.9,294.5 626.3,294.5 626.3,301.0 617.9,301.0" fill="#dedede"/>
<polygon points="626.3,294.5 633.2,294.5 633.2,301.0 626.3,301.0" fill="#dedede"/>
<polygon points="633.2,294.5 640.2,294.5 640.2,301.0 633.2,301.0" fill="#dedede"/>
<polygon points="561.7,301.0 568.5,301.0 568.5,307.2 561.7,307.2" fill="#dedede"/>
<polygon points="568.5,301.0 575.2,301.0 575.2,307.2 568.5,307.2" fill="#dedede"/>
<polygon points="575.2,301.0 583.8,301.0 583.8,307.2 575.2,307.2" fill="#dedede"/>
<polygon points="583.8,301.0 592.4,301.0 592.4,307.2 583.8,307.2" fill="#dedede"/>
<polygon points="592.4,301.0 601.0,301.0 601.0,307.2 592.4,307.2" fill="#dedede"/>
<polygon points="601.0,301.0 609.4,301.0 609.4,307.2 601.0,307.2" fill="#dedede"/>
<polygon points="609.4,301.0 617.9,301.0 617.9,307.2 609.4,307.2" fill="#dedede"/>
<polygon points="617.9,301.0 626.3,301.0 626.3,307.2 617.9,307.2" fill="#dedede"/>
<polygon points="626.3,301.0 633.2,301.0 633.2,307.2 626.3,307.2" fill="#dedede"/>
<polygon points="633.2,301.0 640.2,301.0 640.2,307.2 633.2,307.2" fill="#dedede"/>
<polygon points="561.7,307.2 568.5,307.2 566.8,315.1 561.7,316.1" fill="#dedede"/>
<polygon points="568.5,307.2 575.2,307.2 575.7,313.7 566.8,315.1" fill="#dedede"/>
<polygon points="575.2,307.2 583.8,307.2 584.0,315.9 575.7,313.7" fill="#dedede"/>
<polygon points="583.8,307.2 592.4,307.2 589.1,318.4 584.0,315.9" fill="#dedede"/>
<polygon points="592.4,307.2 601.0,307.2 601.0,316.1 589.1,318.4" fill="#dedede"/>
<polygon points="601.0,307.2 609.4,307.2 609.6,318.1 601.0,316.1" fill="#dedede"/>
<polygon points="609.4,307.2 617.9,307.2 616.3,314.9 609.6,318.1" fill="#dedede"/>
<polygon points="617.9,307.2 626.3,307.2 626.1,316.4 616.3,314.9" fill="#dedede"/>
<polygon points="626.3,307.2 633.2,307.2 633.0,315.4 626.1,316.4" fill="#dedede"/>
<polygon points="633.2,307.2 640.2,307.2 640.2,316.1 633.0,315.4" fill="#dedede"/>
<polygon points="561.7,316.1 566.8,315.1 567.4,326.2 561.7,325.1" fill="#dedede"/>
<polygon points="566.8,315.1 575.7,313.7 575.2,323.0 567.4,326.2" fill="#dedede"/>
<polygon points="575.7,313.7 584.0,315.9 583.0,326.2 575.2,323.0" fill="#dedede"/>
<polygon points="584.0,315.9 589.1,318.4 592.9,326.8 583.0,326.2" fill="#dedede"/>
<polygon points="589.1,318.4 601.0,316.1 601.0,325.1 592.9,326.8" fill="#dedede"/>
<polygon points="601.0,316.1 609.6,318.1 609.4,324.8 601.0,325.1" fill="#dedede"/>
<polygon points="609.6,318.1 616.3,314.9 618.5,326.2 609.4,324.8" fill="#dedede"/>
<polygon points="616.3,314.9 626.1,316.4 626.3,323.0 618.5,326.2" fill="#dedede"/>
<polygon points="626.1,316.4 633.0,315.4 634.1,326.2 626.3,323.0" fill="#dedede"/>
<polygon points="633.0,315.4 640.2,316.1 640.2,325.1 634.1,326.2" fill="#dedede"/>
<polygon points="561.7,325.1 567.4,326.2 564.2,334.0 561.7,334.0" fill="#dedede"/>
<polygon points="583.0,326.2 592.9,326.8 595.2,332.4 586.2,334.0" fill="#dedede"/>
<polygon points="592.9,326.8 601.0,325.1 601.0,334.0 595.2,332.4" fill="#dedede"/>
<polygon points="601.0,325.1 609.4,324.8 609.1,333.2 601.0,334.0" fill="#dedede"/>
<polygon points="609.4,324.8 618.5,326.2 615.3,334.0 609.1,333.2" fill="#dedede"/>
<polygon points="634.1,326.2 640.2,325.1 640.2,334.0 637.3,334.0" fill="#dedede"/>
<polygon points="561.7,334.0 564.2,334.0 567.4,341.8 561.7,345.9" fill="#dedede"/>
<polygon points="586.2,334.0 595.2,332.4 591.4,342.8 583.0,341.8" fill="#dedede"/>
<polygon points="595.2,332.4 601.0,334.0 601.0,345.9 591.4,342.8" fill="#dedede"/>
<polygon points="601.0,334.0 609.1,333.2 608.5,345.3 601.0,345.9" fill="#dedede"/>
<polygon points="609.1,333.2 615.3,334.0 618.5,341.8 608.5,345.3" fill="#dedede"/>
<polygon points="637.3,334.0 640.2,334.0 640.2,345.9 634.1,341.8" fill="#dedede"/>
<polygon points="561.7,345.9 567.4,341.8 566.3,354.6 561.7,357.7" fill="#dedede"/>
<polygon points="567.4,341.8 575.2,345.0 575.6,354.9 566.3,354.6" fill="#dedede"/>
<polygon points="575.2,345.0 583.0,341.8 584.0,352.7 575.6,354.9" fill="#dedede"/>
<polygon points="583.0,341.8 591.4,342.8 589.1,351.2 584.0,352.7" fill="#dedede"/>
<polygon points="591.4,342.8 601.0,345.9 601.0,357.7 589.1,351.2" fill="#dedede"/>
<polygon points="601.0,345.9 608.5,345.3 611.7,352.0 601.0,357.7" fill="#dedede"/>
<polygon points="608.5,345.3 618.5,341.8 617.1,354.6 611.7,352.0" fill="#dedede"/>
<polygon points="618.5,341.8 626.3,345.0 626.2,354.7 617.1,354.6" fill="#dedede"/>
<polygon points="626.3,345.0 634.1,341.8 635.2,355.0 626.2,354.7" fill="#dedede"/>
<polygon points="634.1,341.8 640.2,345.9 640.2,357.7 635.2,355.0" fill="#dedede"/>
<polygon points="561.7,357.7 566.3,354.6 567.6,369.9 561.7,369.6" fill="#dedede"/>
<polygon points="566.3,354.6 575.6,354.9 575.3,371.0 567.6,369.9" fill="#dedede"/>
<polygon points="575.6,354.9 584.0,352.7 584.5,368.9 575.3,371.0" fill="#dedede"/>
<polygon points="584.0,352.7 589.1,351.2 593.9,368.2 584.5,368.9" fill="#dedede"/>
<polygon points="589.1,351.2 601.0,357.7 601.0,369.6 593.9,368.2" fill="#dedede"/>
<polygon points="601.0,357.7 611.7,352.0 609.2,370.5 601.0,369.6" fill="#dedede"/>
<polygon points="611.7,352.0 617.1,354.6 616.8,369.6 609.2,370.5" fill="#dedede"/>
<polygon points="617.1,354.6 626.2,354.7 624.8,370.2 616.8,369.6" fill="#dedede"/>
<polygon points="626.2,354.7 635.2,355.0 634.1,369.9 624.8,370.2" fill="#dedede"/>
<polygon points="635.2,355.0 640.2,357.7 640.2,369.6 634.1,369.9" fill="#dedede"/>
<polygon points="561.7,369.6 567.6,369.9 569.7,380.8 561.7,381.5" fill="#dedede"/>
<polygon points="567.6,369.9 575.3,371.0 575.8,381.8 569.7,380.8" fill="#dedede"/>
<polygon points="575.3,371.0 584.5,368.9 584.1,381.3 575.8,381.8" fill="#dedede"/>
<polygon points="584.5,368.9 593.9,368.2 593.5,383.1 584.1,381.3" fill="#dedede"/>
<polygon points="593.9,368.2 601.0,369.6 601.0,381.5 593.5,383.1" fill="#dedede"/>
<polygon points="601.0,369.6 609.2,370.5 609.4,382.1 601.0,381.5" fill="#dedede"/>
<polygon points="609.2,370.5 616.8,369.6 616.5,382.2 609.4,382.1" fill="#dedede"/>
<polygon points="616.8,369.6 624.8,370.2 626.8,383.3 616.5,382.2" fill="#dedede"/>
<polygon points="624.8,370.2 634.1,369.9 634.3,380.7 626.8,383.3" fill="#dedede"/>
<polygon points="634.1,369.9 640.2,369.6 640.2,381.5 634.3,380.7" fill="#dedede"/>
<polygon points="561.7,381.5 569.7,380.8 567.0,397.4 561.7,393.4" fill="#dedede"/>
<polygon points="569.7,380.8 575.8,381.8 573.7,395.6 567.0,397.4" fill="#dedede"/>
<polygon points="575.8,381.8 584.1,381.3 582.8,395.4 573.7,395.6" fill="#dedede"/>
<polygon points="584.1,381.3 593.5,383.1 589.1,399.8 582.8,395.4" fill="#dedede"/>
<polygon points="593.5,383.1 601.0,381.5 601.0,393.4 589.1,399.8" fill="#dedede"/>
<polygon points="601.0,381.5 609.4,382.1 609.9,397.9 601.0,393.4" fill="#7ed321"/>
<polygon points="609.4,382.1 616.5,382.2 617.4,398.2 609.9,397.9" fill="#dedede"/>
<polygon points="616.5,382.2 626.8,383.3 625.0,395.5 617.4,398.2" fill="#dedede"/>
<polygon points="626.8,383.3 634.3,380.7 634.4,398.2 625.0,395.5" fill="#dedede"/>
<polygon points="634.3,380.7 640.2,381.5 640.2,393.4 634.4,398.2" fill="#dedede"/>
<polygon points="561.7,393.4 567.0,397.4 567.4,409.3 561.7,405.2" fill="#dedede"/>
<polygon points="567.0,397.4 573.7,395.6 575.2,406.1 567.4,409.3" fill="#dedede"/>
<polygon points="573.7,395.6 582.8,395.4 583.0,409.3 575.2,406.1" fill="#7ed321"/>
<polygon points="582.8,395.4 589.1,399.8 593.6,408.3 583.0,409.3" fill="#7ed321"/>
<polygon points="589.1,399.8 601.0,393.4 601.0,405.2 593.6,408.3" fill="#7ed321"/>
<polygon points="601.0,393.4 609.9,397.9 608.4,406.7 601.0,405.2" fill="#7ed321"/>
<polygon points="609.9,397.9 617.4,398.2 618.5,409.3 608.4,406.7" fill="#7ed321"/>
<polygon points="617.4,398.2 625.0,395.5 626.3,406.1 618.5,409.3" fill="#7ed321"/>
<polygon points="625.0,395.5 634.4,398.2 634.1,409.3 626.3,406.1" fill="#dedede"/>
<polygon points="634.4,398.2 640.2,393.4 640.2,405.2 634.1,409.3" fill="#dedede"/>
<polygon points="561.7,405.2 567.4,409.3 564.2,417.1 561.7,417.1" fill="#7ed321"/>
<polygon points="583.0,409.3 593.6,408.3 593.2,418.5 586.2,417.1" fill="#7ed321"/>
<polygon points="593.6,408.3 601.0,405.2 601.0,417.1 593.2,418.5" fill="#7ed321"/>
<polygon points="601.0,405.2 608.4,406.7 609.4,415.8 601.0,417.1" fill="#7ed321"/>
<polygon points="608.4,406.7 618.5,409.3 615.3,417.1 609.4,415.8" fill="#7ed321"/>
<polygon points="634.1,409.3 640.2,405.2 640.2,417.1 637.3,417.1" fill="#7ed321"/>
<polygon points="561.7,417.1 564.2,417.1 567.4,424.9 561.7,427.4" fill="#7ed321"/>
<polygon points="586.2,417.1 593.2,418.5 591.5,425.6 583.0,424.9" fill="#7ed321"/>
<polygon points="593.2,418.5 601.0,417.1 601.0,427.4 591.5,425.6" fill="#7ed321"/>
<polygon points="601.0,417.1 609.4,415.8 608.3,426.5 601.0,427.4" fill="#7ed321"/>
<polygon points="609.4,415.8 615.3,417.1 618.5,424.9 608.3,426.5" fill="#7ed321"/>
<polygon points="637.3,417.1 640.2,417.1 640.2,427.4 634.1,424.9" fill="#7ed321"/>
<polygon points="561.7,427.4 567.4,424.9 567.7,435.1 561.7,437.7" fill="#7ed321"/>
<polygon points="567.4,424.9 575.2,428.1 573.6,436.8 567.7,435.1" fill="#7ed321"/>
<polygon points="575.2,428.1 583.0,424.9 583.4,436.2 573.6,436.8" fill="#7ed321"/>
<polygon points="583.0,424.9 591.5,425.6 592.0,434.6 583.4,436.2" fill="#7ed321"/>
<polygon points="591.5,425.6 601.0,427.4 601.0,437.7 592.0,434.6" fill="#7ed321"/>
<polygon points="601.0,427.4 608.3,426.5 611.2,434.4 601.0,437.7" fill="#7ed321"/>
<polygon points="608.3,426.5 618.5,424.9 618.3,434.4 611.2,434.4" fill="#7ed321"/>
<polygon points="618.5,424.9 626.3,428.1 627.6,438.1 618.3,434.4" fill="#7ed321"/>
<polygon points="626.3,428.1 634.1,424.9 635.4,437.0 627.6,438.1" fill="#7ed321"/>
<polygon points="634.1,424.9 640.2,427.4 640.2,437.7 635.4,437.0" fill="#7ed321"/>
<polygon points="561.7,437.7 567.7,435.1 568.5,448.0 561.7,448.0" fill="#dedede"/>
<polygon points="567.7,435.1 573.6,436.8 575.2,448.0 568.5,448.0" fill="#dedede"/>
<polygon points="573.6,436.8 583.4,436.2 583.8,448.0 575.2,448.0" fill="#dedede"/>
<polygon points="583.4,436.2 592.0,434.6 592.4,448.0 583.8,448.0" fill="#7ed321"/>
<polygon points="592.0,434.6 601.0,437.7 601.0,448.0 592.4,448.0" fill="#7ed321"/>
<polygon points="601.0,437.7 611.2,434.4 609.4,448.0 601.0,448.0" fill="#7ed321"/>
<polygon points="611.2,434.4 618.3,434.4 617.9,448.0 609.4,448.0" fill="#7ed321"/>
<polygon points="618.3,434.4 627.6,438.1 626.3,448.0 617.9,448.0" fill="#dedede"/>
<polygon points="627.6,438.1 635.4,437.0 633.2,448.0 626.3,448.0" fill="#dedede"/>
<polygon points="635.4,437.0 640.2,437.7 640.2,448.0 633.2,448.0" fill="#dedede"/>
<polygon points="561.7,448.0 568.5,448.0 568.5,452.8 561.7,452.8" fill="#dedede"/>
<polygon points="568.5,448.0 575.2,448.0 575.2,452.8 568.5,452.8" fill="#dedede"/>
<polygon points="575.2,448.0 583.8,448.0 583.8,452.8 575.2,452.8" fill="#dedede"/>
<polygon points="583.8,448.0 592.4,448.0 592.4,452.8 583.8,452.8" fill="#dedede"/>
<polygon points="592.4,448.0 601.0,448.0 601.0,452.8 592.4,452.8" fill="#dedede"/>
<polygon points="601.0,448.0 609.4,448.0 609.4,452.8 601.0,452.8" fill="#dedede"/>
<polygon points="609.4,448.0 617.9,448.0 617.9,452.8 609.4,452.8" fill="#dedede"/>
<polygon points="617.9,448.0 626.3,448.0 626.3,452.8 617.9,452.8" fill="#dedede"/>
<polygon points="626.3,448.0 633.2,448.0 633.2,452.8 626.3,452.8" fill="#dedede"/>
<polygon points="633.2,448.0 640.2,448.0 640.2,452.8 633.2,452.8" fill="#dedede"/>
<polygon points="561.7,452.8 568.5,452.8 568.5,457.6 561.7,457.6" fill="#dedede"/>
<polygon points="568.5,452.8 575.2,452.8 575.2,457.6 568.5,457.6" fill="#dedede"/>
<polygon points="575.2,452.8 583.8,452.8 583.8,457.6 575.2,457.6" fill="#dedede"/>
<polygon points="583.8,452.8 592.4,452.8 592.4,457.6 583.8,457.6" fill="#dedede"/>
<polygon points="592.4,452.8 601.0,452.8 601.0,457.6 592.4,457.6" fill="#dedede"/>
<polygon points="601.0,452.8 609.4,452.8 609.4,457.6 601.0,457.6" fill="#dedede"/>
<polygon points="609.4,452.8 617.9,452.8 617.9,457.6 609.4,457.6" fill="#dedede"/>
<polygon points="617.9,452.8 626.3,452.8 626.3,457.6 617.9,457.6" fill="#dedede"/>
<polygon points="626.3,452.8 633.2,452.8 633.2,457.6 626.3,457.6" fill="#dedede"/>
<polygon points="633.2,452.8 640.2,452.8 640.2,457.6 633.2,457.6" fill="#dedede"/>
<polygon points="580.8,334.0 579.2,338.0 583.0,341.8 586.2,334.0" fill="#dedede"/>
<polygon points="579.2,338.0 575.2,339.6 575.2,345.0 583.0,341.8" fill="#dedede"/>
<polygon points="575.2,339.6 571.2,338.0 567.4,341.8 575.2,345.0" fill="#dedede"/>
<polygon points="571.2,338.0 569.6,334.0 564.2,334.0 567.4,341.8" fill="#dedede"/>
<polygon points="569.6,334.0 571.2,330.0 567.4,326.2 564.2,334.0" fill="#dedede"/>
<polygon points="571.2,330.0 575.2,328.4 575.2,323.0 567.4,326.2" fill="#dedede"/>
<polygon points="575.2,328.4 579.2,330.0 583.0,326.2 575.2,323.0" fill="#dedede"/>
<polygon points="579.2,330.0 580.8,334.0 586.2,334.0 583.0,326.2" fill="#dedede"/>
<polygon points="631.9,334.0 630.3,338.0 634.1,341.8 637.3,334.0" fill="#dedede"/>
<polygon points="630.3,338.0 626.3,339.6 626.3,345.0 634.1,341.8" fill="#dedede"/>
<polygon points="626.3,339.6 622.3,338.0 618.5,341.8 626.3,345.0" fill="#dedede"/>
<polygon points="622.3,338.0 620.7,334.0 615.3,334.0 618.5,341.8" fill="#dedede"/>
<polygon points="620.7,334.0 622.3,330.0 618.5,326.2 615.3,334.0" fill="#dedede"/>
<polygon points="622.3,330.0 626.3,328.4 626.3,323.0 618.5,326.2" fill="#dedede"/>
<polygon points="626.3,328.4 630.3,330.0 634.1,326.2 626.3,323.0" fill="#dedede"/>
<polygon points="630.3,330.0 631.9,334.0 637.3,334.0 634.1,326.2" fill="#dedede"/>
<polygon points="580.8,417.1 579.2,421.1 583.0,424.9 586.2,417.1" fill="#7ed321"/>
<polygon points="579.2,421.1 575.2,422.7 575.2,428.1 583.0,424.9" fill="#7ed321"/>
<polygon points="575.2,422.7 571.2,421.1 567.4,424.9 575.2,428.1" fill="#7ed321"/>
<polygon points="571.2,421.1 569.6,417.1 564.2,417.1 567.4,424.9" fill="#7ed321"/>
<polygon points="569.6,417.1 571.2,413.1 567.4,409.3 564.2,417.1" fill="#7ed321"/>
<polygon points="571.2,413.1 575.2,411.5 575.2,406.1 567.4,409.3" fill="#7ed321"/>
<polygon points="575.2,411.5 579.2,413.1 583.0,409.3 575.2,406.1" fill="#7ed321"/>
<polygon points="579.2,413.1 580.8,417.1 586.2,417.1 583.0,409.3" fill="#7ed321"/>
<polygon points="631.9,417.1 630.3,421.1 634.1,424.9 637.3,417.1" fill="#7ed321"/>
<polygon points="630.3,421.1 626.3,422.7 626.3,428.1 634.1,424.9" fill="#7ed321"/>
<polygon points="626.3,422.7 622.3,421.1 618.5,424.9 626.3,428.1" fill="#7ed321"/>
<polygon points="622.3,421.1 620.7,417.1 615.3,417.1 618.5,424.9" fill="#7ed321"/>
<polygon points="620.7,417.1 622.3,413.1 618.5,409.3 615.3,417.1" fill="#7ed321"/>
<polygon points="622.3,413.1 626.3,411.5 626.3,406.1 618.5,409.3" fill="#7ed321"/>
<polygon points="626.3,411.5 630.3,413.1 634.1,409.3 626.3,406.1" fill="#7ed321"/>
<polygon points="630.3,413.1 631.9,417.1 637.3,417.1 634.1,409.3" fill="#7ed321"/>
<path d="M561.7,294.5 L568.5,294.5 L568.5,301.0 L561.7,301.0Z M568.5,294.5 L575.2,294.5 L575.2,301.0 L568.5,301.0Z M575.2,294.5 L583.8,294.5 L583.8,301.0 L575.2,301.0Z M583.8,294.5 L592.4,294.5 L592.4,301.0 L583.8,301.0Z M592.4,294.5 L601.0,294.5 L601.0,301.0 L592.4,301.0Z M601.0,294.5 L609.4,294.5 L609.4,301.0 L601.0,301.0Z M609.4,294.5 L617.9,294.5 L617.9,301.0 L609.4,301.0Z M617.9,294.5 L626.3,294.5 L626.3,301.0 L617.9,301.0Z M626.3,294.5 L633.2,294.5 L633.2,301.0 L626.3,301.0Z M633.2,294.5 L640.2,294.5 L640.2,301.0 L633.2,301.0Z M561.7,301.0 L568.5,301.0 L568.5,307.2 L561.7,307.2Z M568.5,301.0 L575.2,301.0 L575.2,307.2 L568.5,307.2Z M575.2,301.0 L583.8,301.0 L583.8,307.2 L575.2,307.2Z M583.8,301.0 L592.4,301.0 L592.4,307.2 L583.8,307.2Z M592.4,301.0 L601.0,301.0 L601.0,307.2 L592.4,307.2Z M601.0,301.0 L609.4,301.0 L609.4,307.2 L601.0,307.2Z M609.4,301.0 L617.9,301.0 L617.9,307.2 L609.4,307.2Z M617.9,301.0 L626.3,301.0 L626.3,307.2 L617.9,307.2Z M626.3,301.0 L633.2,301.0 L633.2,307.2 L626.3,307.2Z M633.2,301.0 L640.2,301.0 L640.2,307.2 L633.2,307.2Z M561.7,307.2 L568.5,307.2 L566.8,315.1 L561.7,316.1Z M568.5,307.2 L575.2,307.2 L575.7,313.7 L566.8,315.1Z M575.2,307.2 L583.8,307.2 L584.0,315.9 L575.7,313.7Z M583.8,307.2 L592.4,307.2 L589.1,318.4 L584.0,315.9Z M592.4,307.2 L601.0,307.2 L601.0,316.1 L589.1,318.4Z M601.0,307.2 L609.4,307.2 L609.6,318.1 L601.0,316.1Z M609.4,307.2 L617.9,307.2 L616.3,314.9 L609.6,318.1Z M617.9,307.2 L626.3,307.2 L626.1,316.4 L616.3,314.9Z M626.3,307.2 L633.2,307.2 L633.0,315.4 L626.1,316.4Z M633.2,307.2 L640.2,307.2 L640.2,316.1 L633.0,315.4Z M561.7,316.1 L566.8,315.1 L567.4,326.2 L561.7,325.1Z M566.8,315.1 L575.7,313.7 L575.2,323.0 L567.4,326.2Z M575.7,313.7 L584.0,315.9 L583.0,326.2 L575.2,323.0Z M584.0,315.9 L589.1,318.4 L592.9,326.8 L583.0,326.2Z M589.1,318.4 L601.0,316.1 L601.0,325.1 L592.9,326.8Z M601.0,316.1 L609.6,318.1 L609.4,324.8 L601.0,325.1Z M609.6,318.1 L616.3,314.9 L618.5,326.2 L609.4,324.8Z M616.3,314.9 L626.1,316.4 L626.3,323.0 L618.5,326.2Z M626.1,316.4 L633.0,315.4 L634.1,326.2 L626.3,323.0Z M633.0,315.4 L640.2,316.1 L640.2,325.1 L634.1,326.2Z M561.7,325.1 L567.4,326.2 L564.2,334.0 L561.7,334.0Z M583.0,326.2 L592.9,326.8 L595.2,332.4 L586.2,334.0Z M592.9,326.8 L601.0,325.1 L601.0,334.0 L595.2,332.4Z M601.0,325.1 L609.4,324.8 L609.1,333.2 L601.0,334.0Z M609.4,324.8 L618.5,326.2 L615.3,334.0 L609.1,333.2Z M634.1,326.2 L640.2,325.1 L640.2,334.0 L637.3,334.0Z M561.7,334.0 L564.2,334.0 L567.4,341.8 L561.7,345.9Z M586.2,334.0 L595.2,332.4 L591.4,342.8 L583.0,341.8Z M595.2,332.4 L601.0,334.0 L601.0,345.9 L591.4,342.8Z M601.0,334.0 L609.1,333.2 L608.5,345.3 L601.0,345.9Z M609.1,333.2 L615.3,334.0 L618.5,341.8 L608.5,345.3Z M637.3,334.0 L640.2,334.0 L640.2,345.9 L634.1,341.8Z M561.7,345.9 L567.4,341.8 L566.3,354.6 L561.7,357.7Z M567.4,341.8 L575.2,345.0 L575.6,354.9 L566.3,354.6Z M575.2,345.0 L583.0,341.8 L584.0,352.7 L575.6,354.9Z M583.0,341.8 L591.4,342.8 L589.1,351.2 L584.0,352.7Z M591.4,342.8 L601.0,345.9 L601.0,357.7 L589.1,351.2Z M601.0,345.9 L608.5,345.3 L611.7,352.0 L601.0,357.7Z M608.5,345.3 L618.5,341.8 L617.1,354.6 L611.7,352.0Z M618.5,341.8 L626.3,345.0 L626.2,354.7 L617.1,354.6Z M626.3,345.0 L634.1,341.8 L635.2,355.0 L626.2,354.7Z M634.1,341.8 L640.2,345.9 L640.2,357.7 L635.2,355.0Z M561.7,357.7 L566.3,354.6 L567.6,369.9 L561.7,369.6Z M566.3,354.6 L575.6,354.9 L575.3,371.0 L567.6,369.9Z M575.6,354.9 L584.0,352.7 L584.5,368.9 L575.3,371.0Z M584.0,352.7 L589.1,351.2 L593.9,368.2 L584.5,368.9Z M589.1,351.2 L601.0,357.7 L601.0,369.6 L593.9,368.2Z M601.0,357.7 L611.7,352.0 L609.2,370.5 L601.0,369.6Z M611.7,352.0 L617.1,354.6 L616.8,369.6 L609.2,370.5Z M617.1,354.6 L626.2,354.7 L624.8,370.2 L616.8,369.6Z M626.2,354.7 L635.2,355.0 L634.1,369.9 L624.8,370.2Z M635.2,355.0 L640.2,357.7 L640.2,369.6 L634.1,369.9Z M561.7,369.6 L567.6,369.9 L569.7,380.8 L561.7,381.5Z M567.6,369.9 L575.3,371.0 L575.8,381.8 L569.7,380.8Z M575.3,371.0 L584.5,368.9 L584.1,381.3 L575.8,381.8Z M584.5,368.9 L593.9,368.2 L593.5,383.1 L584.1,381.3Z M593.9,368.2 L601.0,369.6 L601.0,381.5 L593.5,383.1Z M601.0,369.6 L609.2,370.5 L609.4,382.1 L601.0,381.5Z M609.2,370.5 L616.8,369.6 L616.5,382.2 L609.4,382.1Z M616.8,369.6 L624.8,370.2 L626.8,383.3 L616.5,382.2Z M624.8,370.2 L634.1,369.9 L634.3,380.7 L626.8,383.3Z M634.1,369.9 L640.2,369.6 L640.2,381.5 L634.3,380.7Z M561.7,381.5 L569.7,380.8 L567.0,397.4 L561.7,393.4Z M569.7,380.8 L575.8,381.8 L573.7,395.6 L567.0,397.4Z M575.8,381.8 L584.1,381.3 L582.8,395.4 L573.7,395.6Z M584.1,381.3 L593.5,383.1 L589.1,399.8 L582.8,395.4Z M593.5,383.1 L601.0,381.5 L601.0,393.4 L589.1,399.8Z M601.0,381.5 L609.4,382.1 L609.9,397.9 L601.0,393.4Z M609.4,382.1 L616.5,382.2 L617.4,398.2 L609.9,397.9Z M616.5,382.2 L626.8,383.3 L625.0,395.5 L617.4,398.2Z M626.8,383.3 L634.3,380.7 L634.4,398.2 L625.0,395.5Z M634.3,380.7 L640.2,381.5 L640.2,393.4 L634.4,398.2Z M561.7,393.4 L567.0,397.4 L567.4,409.3 L561.7,405.2Z M567.0,397.4 L573.7,395.6 L575.2,406.1 L567.4,409.3Z M573.7,395.6 L582.8,395.4 L583.0,409.3 L575.2,406.1Z M582.8,395.4 L589.1,399.8 L593.6,408.3 L583.0,409.3Z M589.1,399.8 L601.0,393.4 L601.0,405.2 L593.6,408.3Z M601.0,393.4 L609.9,397.9 L608.4,406.7 L601.0,405.2Z M609.9,397.9 L617.4,398.2 L618.5,409.3 L608.4,406.7Z M617.4,398.2 L625.0,395.5 L626.3,406.1 L618.5,409.3Z M625.0,395.5 L634.4,398.2 L634.1,409.3 L626.3,406.1Z M634.4,398.2 L640.2,393.4 L640.2,405.2 L634.1,409.3Z M561.7,405.2 L567.4,409.3 L564.2,417.1 L561.7,417.1Z M583.0,409.3 L593.6,408.3 L593.2,418.5 L586.2,417.1Z M593.6,408.3 L601.0,405.2 L601.0,417.1 L593.2,418.5Z M601.0,405.2 L608.4,406.7 L609.4,415.8 L601.0,417.1Z M608.4,406.7 L618.5,409.3 L615.3,417.1 L609.4,415.8Z M634.1,409.3 L640.2,405.2 L640.2,417.1 L637.3,417.1Z M561.7,417.1 L564.2,417.1 L567.4,424.9 L561.7,427.4Z M586.2,417.1 L593.2,418.5 L591.5,425.6 L583.0,424.9Z M593.2,418.5 L601.0,417.1 L601.0,427.4 L591.5,425.6Z M601.0,417.1 L609.4,415.8 L608.3,426.5 L601.0,427.4Z M609.4,415.8 L615.3,417.1 L618.5,424.9 L608.3,426.5Z M637.3,417.1 L640.2,417.1 L640.2,427.4 L634.1,424.9Z M561.7,427.4 L567.4,424.9 L567.7,435.1 L561.7,437.7Z M567.4,424.9 L575.2,428.1 L573.6,436.8 L567.7,435.1Z M575.2,428.1 L583.0,424.9 L583.4,436.2 L573.6,436.8Z M583.0,424.9 L591.5,425.6 L592.0,434.6 L583.4,436.2Z M591.5,425.6 L601.0,427.4 L601.0,437.7 L592.0,434.6Z M601.0,427.4 L608.3,426.5 L611.2,434.4 L601.0,437.7Z M608.3,426.5 L618.5,424.9 L618.3,434.4 L611.2,434.4Z M618.5,424.9 L626.3,428.1 L627.6,438.1 L618.3,434.4Z M626.3,428.1 L634.1,424.9 L635.4,437.0 L627.6,438.1Z M634.1,424.9 L640.2,427.4 L640.2,437.7 L635.4,437.0Z M561.7,437.7 L567.7,435.1 L568.5,448.0 L561.7,448.0Z M567.7,435.1 L573.6,436.8 L575.2,448.0 L568.5,448.0Z M573.6,436.8 L583.4,436.2 L583.8,448.0 L575.2,448.0Z M583.4,436.2 L592.0,434.6 L592.4,448.0 L583.8,448.0Z M592.0,434.6 L601.0,437.7 L601.0,448.0 L592.4,448.0Z M601.0,437.7 L611.2,434.4 L609.4,448.0 L601.0,448.0Z M611.2,434.4 L618.3,434.4 L617.9,448.0 L609.4,448.0Z M618.3,434.4 L627.6,438.1 L626.3,448.0 L617.9,448.0Z M627.6,438.1 L635.4,437.0 L633.2,448.0 L626.3,448.0Z M635.4,437.0 L640.2,437.7 L640.2,448.0 L633.2,448.0Z M561.7,448.0 L568.5,448.0 L568.5,452.8 L561.7,452.8Z M568.5,448.0 L575.2,448.0 L575.2,452.8 L568.5,452.8Z M575.2,448.0 L583.8,448.0 L583.8,452.8 L575.2,452.8Z M583.8,448.0 L592.4,448.0 L592.4,452.8 L583.8,452.8Z M592.4,448.0 L601.0,448.0 L601.0,452.8 L592.4,452.8Z M601.0,448.0 L609.4,448.0 L609.4,452.8 L601.0,452.8Z M609.4,448.0 L617.9,448.0 L617.9,452.8 L609.4,452.8Z M617.9,448.0 L626.3,448.0 L626.3,452.8 L617.9,452.8Z M626.3,448.0 L633.2,448.0 L633.2,452.8 L626.3,452.8Z M633.2,448.0 L640.2,448.0 L640.2,452.8 L633.2,452.8Z M561.7,452.8 L568.5,452.8 L568.5,457.6 L561.7,457.6Z M568.5,452.8 L575.2,452.8 L575.2,457.6 L568.5,457.6Z M575.2,452.8 L583.8,452.8 L583.8,457.6 L575.2,457.6Z M583.8,452.8 L592.4,452.8 L592.4,457.6 L583.8,457.6Z M592.4,452.8 L601.0,452.8 L601.0,457.6 L592.4,457.6Z M601.0,452.8 L609.4,452.8 L609.4,457.6 L601.0,457.6Z M609.4,452.8 L617.9,452.8 L617.9,457.6 L609.4,457.6Z M617.9,452.8 L626.3,452.8 L626.3,457.6 L617.9,457.6Z M626.3,452.8 L633.2,452.8 L633.2,457.6 L626.3,457.6Z M633.2,452.8 L640.2,452.8 L640.2,457.6 L633.2,457.6Z M580.8,334.0 L579.2,338.0 L583.0,341.8 L586.2,334.0Z M579.2,338.0 L575.2,339.6 L575.2,345.0 L583.0,341.8Z M575.2,339.6 L571.2,338.0 L567.4,341.8 L575.2,345.0Z M571.2,338.0 L569.6,334.0 L564.2,334.0 L567.4,341.8Z M569.6,334.0 L571.2,330.0 L567.4,326.2 L564.2,334.0Z M571.2,330.0 L575.2,328.4 L575.2,323.0 L567.4,326.2Z M575.2,328.4 L579.2,330.0 L583.0,326.2 L575.2,323.0Z M579.2,330.0 L580.8,334.0 L586.2,334.0 L583.0,326.2Z M631.9,334.0 L630.3,338.0 L634.1,341.8 L637.3,334.0Z M630.3,338.0 L626.3,339.6 L626.3,345.0 L634.1,341.8Z M626.3,339.6 L622.3,338.0 L618.5,341.8 L626.3,345.0Z M622.3,338.0 L620.7,334.0 L615.3,334.0 L618.5,341.8Z M620.7,334.0 L622.3,330.0 L618.5,326.2 L615.3,334.0Z M622.3,330.0 L626.3,328.4 L626.3,323.0 L618.5,326.2Z M626.3,328.4 L630.3,330.0 L634.1,326.2 L626.3,323.0Z M630.3,330.0 L631.9,334.0 L637.3,334.0 L634.1,326.2Z M580.8,417.1 L579.2,421.1 L583.0,424.9 L586.2,417.1Z M579.2,421.1 L575.2,422.7 L575.2,428.1 L583.0,424.9Z M575.2,422.7 L571.2,421.1 L567.4,424.9 L575.2,428.1Z M571.2,421.1 L569.6,417.1 L564.2,417.1 L567.4,424.9Z M569.6,417.1 L571.2,413.1 L567.4,409.3 L564.2,417.1Z M571.2,413.1 L575.2,411.5 L575.2,406.1 L567.4,409.3Z M575.2,411.5 L579.2,413.1 L583.0,409.3 L575.2,406.1Z M579.2,413.1 L580.8,417.1 L586.2,417.1 L583.0,409.3Z M631.9,417.1 L630.3,421.1 L634.1,424.9 L637.3,417.1Z M630.3,421.1 L626.3,422.7 L626.3,428.1 L634.1,424.9Z M626.3,422.7 L622.3,421.1 L618.5,424.9 L626.3,428.1Z M622.3,421.1 L620.7,417.1 L615.3,417.1 L618.5,424.9Z M620.7,417.1 L622.3,413.1 L618.5,409.3 L615.3,417.1Z M622.3,413.1 L626.3,411.5 L626.3,406.1 L618.5,409.3Z M626.3,411.5 L630.3,413.1 L634.1,409.3 L626.3,406.1Z M630.3,413.1 L631.9,417.1 L637.3,417.1 L634.1,409.3Z" stroke="#202020" stroke-width="0.65" fill="none" stroke-linejoin="round"/>
<rect x="561.7" y="294.5" width="78.5" height="163.10000000000002" fill="none" stroke="#222" stroke-width="0.9"/>
<path d="M566.9,307.2H634.6M601,307.2V446.2" stroke="#000" stroke-width="2.1"/>
<circle cx="575.2" cy="334.0" r="5.4" fill="#a9a9a9" stroke="#333" stroke-width="0.7"/>
<text x="573.35" y="336.4" font-size="6.6" fill="#333" font-family="Liberation Sans">3</text>
<circle cx="626.3" cy="334.0" r="5.4" fill="#a9a9a9" stroke="#333" stroke-width="0.7"/>
<text x="624.4499999999999" y="336.4" font-size="6.6" fill="#333" font-family="Liberation Sans">4</text>
<circle cx="575.2" cy="417.1" r="5.4" fill="#a9a9a9" stroke="#333" stroke-width="0.7"/>
<text x="573.35" y="419.5" font-size="6.6" fill="#333" font-family="Liberation Sans">1</text>
<circle cx="626.3" cy="417.1" r="5.4" fill="#a9a9a9" stroke="#333" stroke-width="0.7"/>
<text x="624.4499999999999" y="419.5" font-size="6.6" fill="#333" font-family="Liberation Sans">2</text>
<path d="M567.8,444.6H634" stroke="#f07022" stroke-width="3.4" stroke-linecap="round"/>
<path d="M601,430V446.2" stroke="#000" stroke-width="2"/>
<g font-family="Liberation Sans" font-size="4.2" fill="#333">
<text x="726" y="296">σ⊥ [MPa]</text>
<text x="766" y="304.2">161.4</text>
<text x="754.5" y="338">-98.4</text>
<text x="726" y="345.2">τ⊥ [MPa]</text>
<text x="754.5" y="351.6">102.6</text>
<text x="767.5" y="378">-87.9</text>
<text x="726" y="385.6">τ|| [MPa]</text>
<text x="768.6" y="393.2">70.1</text>
<text x="726" y="413.4">-53.8</text>
<text x="726" y="419.7">Equivalent stress [MPa]</text>
<text x="766" y="428.3">253.0</text>
<text x="739.5" y="456.4">54.3</text>
</g>
<rect x="726.30" y="307.20" width="7.10" height="14.90" fill="#8fd0f8" stroke="#6aa8d0" stroke-width="0.35"/>
<rect x="733.40" y="315.80" width="7.10" height="6.30" fill="#8fd0f8" stroke="#6aa8d0" stroke-width="0.35"/>
<rect x="747.60" y="322.10" width="7.10" height="9.50" fill="#8fd0f8" stroke="#6aa8d0" stroke-width="0.35"/>
<rect x="754.70" y="322.10" width="7.10" height="11.10" fill="#8fd0f8" stroke="#6aa8d0" stroke-width="0.35"/>
<rect x="761.80" y="322.10" width="7.10" height="3.60" fill="#8fd0f8" stroke="#6aa8d0" stroke-width="0.35"/>
<rect x="768.90" y="312.40" width="7.10" height="9.70" fill="#8fd0f8" stroke="#6aa8d0" stroke-width="0.35"/>
<rect x="776.00" y="304.20" width="7.10" height="17.90" fill="#8fd0f8" stroke="#6aa8d0" stroke-width="0.35"/>
<path d="M726.30,322.10 L726.30,307.20 L733.40,307.20 L733.40,315.80 L740.50,315.80 L740.50,322.10 L747.60,322.10 L747.60,331.60 L754.70,331.60 L754.70,333.20 L761.80,333.20 L761.80,325.70 L768.90,325.70 L768.90,312.40 L776.00,312.40 L776.00,304.20 L783.10,304.20 L783.10,322.10" stroke="#333" stroke-width="0.55" fill="none"/>
<path d="M726.3,322.1H783.1" stroke="#333" stroke-width="0.5"/>
<rect x="726.30" y="364.40" width="7.10" height="8.90" fill="#8fd0f8" stroke="#6aa8d0" stroke-width="0.35"/>
<rect x="733.40" y="364.40" width="7.10" height="2.30" fill="#8fd0f8" stroke="#6aa8d0" stroke-width="0.35"/>
<rect x="747.60" y="354.40" width="7.10" height="10.00" fill="#8fd0f8" stroke="#6aa8d0" stroke-width="0.35"/>
<rect x="754.70" y="353.00" width="7.10" height="11.40" fill="#8fd0f8" stroke="#6aa8d0" stroke-width="0.35"/>
<rect x="761.80" y="361.40" width="7.10" height="3.00" fill="#8fd0f8" stroke="#6aa8d0" stroke-width="0.35"/>
<rect x="768.90" y="364.40" width="7.10" height="4.90" fill="#8fd0f8" stroke="#6aa8d0" stroke-width="0.35"/>
<rect x="776.00" y="364.40" width="7.10" height="9.90" fill="#8fd0f8" stroke="#6aa8d0" stroke-width="0.35"/>
<path d="M726.30,364.40 L726.30,373.30 L733.40,373.30 L733.40,366.70 L740.50,366.70 L740.50,364.40 L747.60,364.40 L747.60,354.40 L754.70,354.40 L754.70,353.00 L761.80,353.00 L761.80,361.40 L768.90,361.40 L768.90,369.30 L776.00,369.30 L776.00,374.30 L783.10,374.30 L783.10,364.40" stroke="#333" stroke-width="0.55" fill="none"/>
<path d="M726.3,364.4H783.1" stroke="#333" stroke-width="0.5"/>
<rect x="726.30" y="402.20" width="7.10" height="6.50" fill="#8fd0f8" stroke="#6aa8d0" stroke-width="0.35"/>
<rect x="733.40" y="402.20" width="7.10" height="1.20" fill="#8fd0f8" stroke="#6aa8d0" stroke-width="0.35"/>
<rect x="740.50" y="402.20" width="7.10" height="0.40" fill="#8fd0f8" stroke="#6aa8d0" stroke-width="0.35"/>
<rect x="747.60" y="402.20" width="7.10" height="0.80" fill="#8fd0f8" stroke="#6aa8d0" stroke-width="0.35"/>
<rect x="761.80" y="402.20" width="7.10" height="2.00" fill="#8fd0f8" stroke="#6aa8d0" stroke-width="0.35"/>
<rect x="768.90" y="401.20" width="7.10" height="1.00" fill="#8fd0f8" stroke="#6aa8d0" stroke-width="0.35"/>
<rect x="776.00" y="394.20" width="7.10" height="8.00" fill="#8fd0f8" stroke="#6aa8d0" stroke-width="0.35"/>
<path d="M726.30,402.20 L726.30,408.70 L733.40,408.70 L733.40,403.40 L740.50,403.40 L740.50,402.60 L747.60,402.60 L747.60,403.00 L754.70,403.00 L754.70,402.20 L761.80,402.20 L761.80,404.20 L768.90,404.20 L768.90,401.20 L776.00,401.20 L776.00,394.20 L783.10,394.20 L783.10,402.20" stroke="#333" stroke-width="0.55" fill="none"/>
<path d="M726.3,402.2H783.1" stroke="#333" stroke-width="0.5"/>
<rect x="726.30" y="432.10" width="7.10" height="24.90" fill="#b8f060" stroke="#777" stroke-width="0.35"/>
<rect x="733.40" y="449.00" width="7.10" height="8.00" fill="#c4c4c4" stroke="#777" stroke-width="0.35"/>
<rect x="740.50" y="455.00" width="7.10" height="2.00" fill="#c4c4c4" stroke="#777" stroke-width="0.35"/>
<rect x="747.60" y="437.10" width="7.10" height="19.90" fill="#c4c4c4" stroke="#777" stroke-width="0.35"/>
<rect x="754.70" y="434.10" width="7.10" height="22.90" fill="#c4c4c4" stroke="#777" stroke-width="0.35"/>
<rect x="761.80" y="450.40" width="7.10" height="6.60" fill="#c4c4c4" stroke="#777" stroke-width="0.35"/>
<rect x="768.90" y="443.50" width="7.10" height="13.50" fill="#c4c4c4" stroke="#777" stroke-width="0.35"/>
<rect x="776.00" y="428.60" width="7.10" height="28.40" fill="#b8f060" stroke="#777" stroke-width="0.35"/>
<path d="M726.30,457.00 L726.30,432.10 L733.40,432.10 L733.40,449.00 L740.50,449.00 L740.50,455.00 L747.60,455.00 L747.60,437.10 L754.70,437.10 L754.70,434.10 L761.80,434.10 L761.80,450.40 L768.90,450.40 L768.90,443.50 L776.00,443.50 L776.00,428.60 L783.10,428.60 L783.10,457.00" stroke="#666" stroke-width="0.55" fill="none"/>
<path d="M726.3,457.0H783.1" stroke="#333" stroke-width="0.5"/>
</svg><div id="status" class="a"></div>
<div class="st" style="left:9.6px">Design code:</div><div class="st" style="left:41px"><b>EN</b></div>
<div class="st" style="left:55.5px">Analysis:</div><div class="st" style="left:77px"><b>Stress, strain</b></div>
<div class="st" style="left:115px">Load effects:</div><div class="st" style="left:147px"><b>In equilibrium</b></div>
<div class="st" style="left:187.7px">Units:</div><div class="st" style="left:204px"><b>mm</b></div>
<div class="st" style="left:748.5px;color:#f07022">www.<span style="color:#fff">ideastatica</span>.com</div>
</body></html>
